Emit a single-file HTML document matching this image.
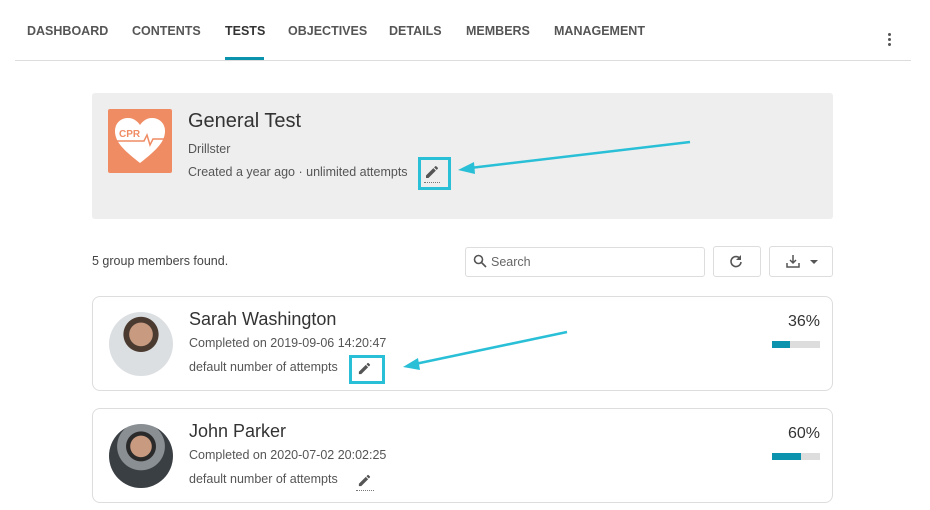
<!DOCTYPE html><html><head><style>
body{margin:0;width:930px;height:510px;background:#fff;font-family:"Liberation Sans",sans-serif;position:relative;overflow:hidden;color:#333}
.a{position:absolute;white-space:nowrap}
.nav{font-size:12.5px;font-weight:bold;letter-spacing:0;color:#555;top:24px}
.s{font-size:12.5px;color:#555}
.card{position:absolute;left:92px;width:739px;height:93px;border:1px solid #ddd;border-radius:8px}
.bar{position:absolute;width:48px;height:7px;background:#ddd}
.bar i{display:block;height:7px;background:#0b93ad}
</style></head><body>
<div class="a nav" style="left:27px">DASHBOARD</div>
<div class="a nav" style="left:132px">CONTENTS</div>
<div class="a nav" style="left:225px;color:#333">TESTS</div>
<div class="a nav" style="left:288px">OBJECTIVES</div>
<div class="a nav" style="left:389px">DETAILS</div>
<div class="a nav" style="left:466px">MEMBERS</div>
<div class="a nav" style="left:554px">MANAGEMENT</div>
<div class="a" style="left:225px;top:57px;width:39px;height:3px;background:#0b93ad"></div>
<div class="a" style="left:15px;top:60px;width:896px;height:1px;background:#ddd"></div>
<div class="a" style="left:888px;top:33px;width:3px;height:3px;background:#555;border-radius:50%;box-shadow:0 5px #555,0 10px #555"></div>

<div class="a" style="left:92px;top:93px;width:741px;height:126px;background:#eee;border-radius:3px"></div>
<div class="a" style="left:108px;top:109px;width:64px;height:64px;background:#f08c64;border-radius:2px">
<svg width="64" height="64" viewBox="0 0 64 64"><path d="M32 54 C14 40 7 32 7 22 C7 14 13 9 20 9 C26 9 30 13 32 16 C34 13 38 9 44 9 C51 9 57 14 57 22 C57 32 50 40 32 54Z" fill="#fff"/><text x="11" y="28" font-size="10" font-weight="bold" fill="#f08c64" font-family="Liberation Sans">CPR</text><path d="M9 32 H36 L39 26 L42 36 L45 30 H56" stroke="#f08c64" stroke-width="1.5" fill="none"/></svg></div>
<div class="a" style="left:188px;top:110px;font-size:20px;color:#333">General Test</div>
<div class="a s" style="left:188px;top:142px">Drillster</div>
<div class="a s" style="left:188px;top:165px">Created a year ago · unlimited attempts</div>
<div class="a" style="left:418px;top:157px;width:27px;height:27px;border:3px solid #29bfd6"></div>
<svg class="a" style="left:424px;top:164px" width="16" height="16" viewBox="0 0 24 24"><path d="M3 17.25V21h3.75L17.81 9.94l-3.75-3.75L3 17.25zM20.71 7.04a1 1 0 000-1.41l-2.34-2.34a1 1 0 00-1.41 0l-1.83 1.83 3.75 3.75 1.83-1.83z" fill="#555"/></svg>
<div class="a" style="left:424px;top:182px;width:16px;border-top:1px dotted #777"></div>
<svg class="a" style="left:0;top:0" width="930" height="510"><line x1="690" y1="142" x2="470" y2="168" stroke="#29bfd6" stroke-width="2.5"/><polygon points="458,170 474,162 475,174" fill="#29bfd6"/><line x1="567" y1="332" x2="415" y2="364" stroke="#29bfd6" stroke-width="2.5"/><polygon points="403,367 418,358 420,370" fill="#29bfd6"/></svg>

<div class="a s" style="left:92px;top:254px;color:#444">5 group members found.</div>
<div class="a" style="left:465px;top:247px;width:238px;height:28px;border:1px solid #ddd;border-radius:3px"></div>
<svg class="a" style="left:473px;top:254px" width="14" height="14" viewBox="0 0 14 14"><circle cx="5.5" cy="5.5" r="4" stroke="#555" stroke-width="1.6" fill="none"/><line x1="8.5" y1="8.5" x2="13" y2="13" stroke="#555" stroke-width="1.6"/></svg>
<div class="a s" style="left:491px;top:255px;color:#666">Search</div>
<div class="a" style="left:713px;top:246px;width:46px;height:29px;border:1px solid #ddd;border-radius:3px"></div>
<svg class="a" style="left:729px;top:254px" width="14" height="14" viewBox="0 0 14 14"><path d="M11 4.5A5 5 0 1 0 12 8" stroke="#555" stroke-width="1.6" fill="none"/><polygon points="12,1 12,6 7,6" fill="#555"/></svg>
<div class="a" style="left:769px;top:246px;width:62px;height:29px;border:1px solid #ddd;border-radius:3px"></div>
<svg class="a" style="left:785px;top:253px" width="16" height="16" viewBox="0 0 16 16"><path d="M8 2v8M5 7l3 3 3-3M2 10v4h12v-4" stroke="#555" stroke-width="1.5" fill="none"/></svg>
<div class="a" style="left:810px;top:260px;border:4px solid transparent;border-top:4px solid #555"></div>

<div class="card" style="top:296px"></div>
<div class="a" style="left:109px;top:312px;width:64px;height:64px;border-radius:50%;background:radial-gradient(circle at 50% 35%,#c89a80 0 22%,#4a3a30 23% 33%,#dcdfe2 34%)"></div>
<div class="a" style="left:189px;top:309px;font-size:18px;color:#333">Sarah Washington</div>
<div class="a s" style="left:189px;top:336px">Completed on 2019-09-06 14:20:47</div>
<div class="a s" style="left:189px;top:360px">default number of attempts</div>
<div class="a" style="left:349px;top:355px;width:30px;height:23px;border:3px solid #29bfd6"></div>
<svg class="a" style="left:357px;top:361px" width="15" height="15" viewBox="0 0 24 24"><path d="M3 17.25V21h3.75L17.81 9.94l-3.75-3.75L3 17.25zM20.71 7.04a1 1 0 000-1.41l-2.34-2.34a1 1 0 00-1.41 0l-1.83 1.83 3.75 3.75 1.83-1.83z" fill="#555"/></svg>
<div class="a" style="right:110px;top:313px;font-size:16px;color:#333">36%</div>
<div class="bar" style="left:772px;top:341px"><i style="width:18px"></i></div>

<div class="card" style="top:408px"></div>
<div class="a" style="left:109px;top:424px;width:64px;height:64px;border-radius:50%;background:radial-gradient(circle at 50% 35%,#c89a80 0 20%,#2a2a2a 21% 28%,#8a8f94 29% 45%,#3a3f44 46%)"></div>
<div class="a" style="left:189px;top:421px;font-size:18px;color:#333">John Parker</div>
<div class="a s" style="left:189px;top:448px">Completed on 2020-07-02 20:02:25</div>
<div class="a s" style="left:189px;top:472px">default number of attempts</div>
<svg class="a" style="left:357px;top:473px" width="15" height="15" viewBox="0 0 24 24"><path d="M3 17.25V21h3.75L17.81 9.94l-3.75-3.75L3 17.25zM20.71 7.04a1 1 0 000-1.41l-2.34-2.34a1 1 0 00-1.41 0l-1.83 1.83 3.75 3.75 1.83-1.83z" fill="#555"/></svg>
<div class="a" style="left:356px;top:490px;width:18px;border-top:1px dotted #777"></div>
<div class="a" style="right:110px;top:425px;font-size:16px;color:#333">60%</div>
<div class="bar" style="left:772px;top:453px"><i style="width:29px"></i></div>
</body></html>
